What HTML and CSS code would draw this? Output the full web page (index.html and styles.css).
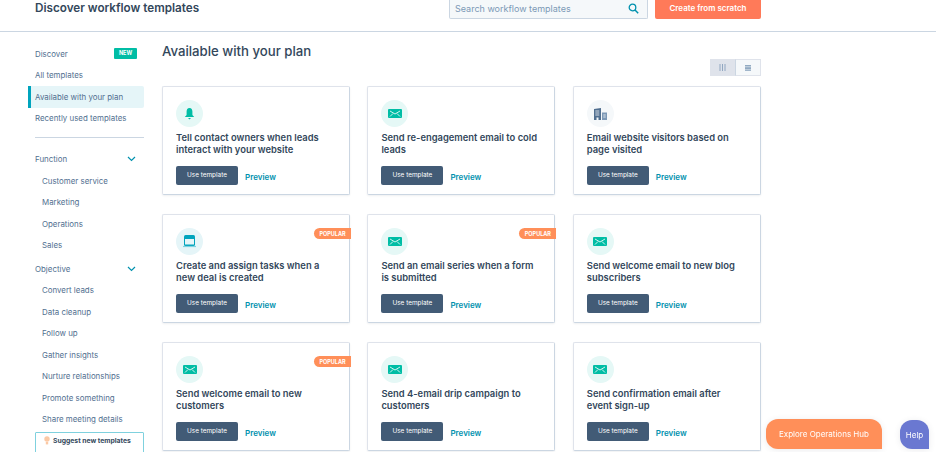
FILE: index.html
```html
<!DOCTYPE html>
<html lang="en">
<head>
<meta charset="utf-8">
<title>Discover workflow templates</title>
<link rel="stylesheet" href="styles.css">
</head>
<body>
<svg class="defs" width="0" height="0" aria-hidden="true">
  <defs>
    <symbol id="mail" viewBox="0 0 14 9"><rect width="14" height="9" rx="1" fill="#00bda5"/><path d="M2 2 7 5 12 2M2 7.5l3-3M12 7.5 9 4.5" fill="none" stroke="#e5f8f6" stroke-width=".9"/></symbol>
  </defs>
</svg>
<header class="topbar">
  <h1 class="page-title">Discover workflow templates</h1>
  <div class="top-actions">
    <div class="search"><span>Search workflow templates</span>
      <svg width="11" height="11" viewBox="0 0 11 11"><circle cx="4.5" cy="4.5" r="3.3" fill="none" stroke="#0091ae" stroke-width="1.3"/><path d="M7 7l3.2 3.2" stroke="#0091ae" stroke-width="1.5"/></svg>
    </div>
    <div class="btn-create">Create from scratch</div>
  </div>
</header>
<div class="layout">
  <nav class="side">
    <div class="nav-item"><span>Discover</span><span class="new">NEW</span></div>
    <div class="nav-item">All templates</div>
    <div class="nav-item active">Available with your plan</div>
    <div class="nav-item">Recently used templates</div>
    <div class="rule"></div>
    <div class="nav-head"><span>Function</span><svg width="9" height="6" viewBox="0 0 9 6"><path d="M1 1l3.5 3.5L8 1" fill="none" stroke="#0091ae" stroke-width="1.2"/></svg></div>
    <div class="nav-sub">Customer service</div>
    <div class="nav-sub">Marketing</div>
    <div class="nav-sub">Operations</div>
    <div class="nav-sub">Sales</div>
    <div class="nav-head second"><span>Objective</span><svg width="9" height="6" viewBox="0 0 9 6"><path d="M1 1l3.5 3.5L8 1" fill="none" stroke="#0091ae" stroke-width="1.2"/></svg></div>
    <div class="nav-sub">Convert leads</div>
    <div class="nav-sub">Data cleanup</div>
    <div class="nav-sub">Follow up</div>
    <div class="nav-sub">Gather insights</div>
    <div class="nav-sub">Nurture relationships</div>
    <div class="nav-sub">Promote something</div>
    <div class="nav-sub">Share meeting details</div>
    <div class="suggest">
      <svg width="6" height="9" viewBox="0 0 6 9"><circle cx="3" cy="3" r="2.7" fill="#fbc9a5"/><rect x="1.8" y="6" width="2.4" height="2.4" fill="#fbc9a5"/></svg>
      <span>Suggest new templates</span>
    </div>
  </nav>
  <main class="content">
    <h2 class="section-title">Available with your plan</h2>
    <div class="toggle">
      <div class="tg on"><svg width="7" height="7" viewBox="0 0 7 7"><path d="M1 0v7M3.5 0v7M6 0v7" stroke="#7c98b6" stroke-width=".8"/></svg></div>
      <div class="tg"><svg width="6" height="6" viewBox="0 0 6 6"><path d="M0 .7h6M0 2.2h6M0 3.7h6M0 5.2h6" stroke="#7c98b6" stroke-width="1"/></svg></div>
    </div>
    <div class="grid">
      <article class="card">
        <div class="ico mint"><svg width="11" height="12" viewBox="0 0 11 12"><path d="M5.5 0C7.5 0 8.4 1.6 8.4 3.5V7l1.8 2H.8l1.8-2V3.5C2.6 1.6 3.5 0 5.5 0z" fill="#00bda5"/><path d="M4 10h3l-1.5 1.6z" fill="#00bda5"/></svg></div>
        <h3>Tell contact owners when leads interact with your website</h3>
        <div class="acts"><span class="use">Use template</span><span class="prev">Preview</span></div>
      </article>
      <article class="card">
        <div class="ico mint"><svg width="14" height="9"><use href="#mail"/></svg></div>
        <h3>Send re-engagement email to cold leads</h3>
        <div class="acts"><span class="use">Use template</span><span class="prev">Preview</span></div>
      </article>
      <article class="card">
        <div class="ico grey"><svg width="13" height="12" viewBox="0 0 13 12"><path d="M0 1l7-1v12H4.5V9.5h-2V12H0z" fill="#516f90"/><path d="M8 4.5h5V12H8z" fill="#7c98b6"/><path d="M1.3 3h4M1.3 5h4M1.3 7h4M9.3 7h2.4M9.3 9h2.4" stroke="#f5f8fa" stroke-width=".8"/></svg></div>
        <h3>Email website visitors based on page visited</h3>
        <div class="acts"><span class="use">Use template</span><span class="prev">Preview</span></div>
      </article>
      <article class="card">
        <span class="badge">POPULAR</span>
        <div class="ico sky"><svg width="13" height="13" viewBox="0 0 13 13"><rect x="1" y="0" width="11" height="11" rx="1.5" fill="#00a4bd"/><rect x="2" y="4" width="9" height="5.5" fill="#e5f5f8"/><path d="M0 11.5h13" stroke="#7fd1de" stroke-width="1.2"/></svg></div>
        <h3>Create and assign tasks when a new deal is created</h3>
        <div class="acts"><span class="use">Use template</span><span class="prev">Preview</span></div>
      </article>
      <article class="card">
        <span class="badge">POPULAR</span>
        <div class="ico mint"><svg width="14" height="9"><use href="#mail"/></svg></div>
        <h3>Send an email series when a form is submitted</h3>
        <div class="acts"><span class="use">Use template</span><span class="prev">Preview</span></div>
      </article>
      <article class="card">
        <div class="ico mint"><svg width="14" height="9"><use href="#mail"/></svg></div>
        <h3>Send welcome email to new blog subscribers</h3>
        <div class="acts"><span class="use">Use template</span><span class="prev">Preview</span></div>
      </article>
      <article class="card">
        <span class="badge">POPULAR</span>
        <div class="ico mint"><svg width="14" height="9"><use href="#mail"/></svg></div>
        <h3>Send welcome email to new customers</h3>
        <div class="acts"><span class="use">Use template</span><span class="prev">Preview</span></div>
      </article>
      <article class="card">
        <div class="ico mint"><svg width="14" height="9"><use href="#mail"/></svg></div>
        <h3>Send 4-email drip campaign to customers</h3>
        <div class="acts"><span class="use">Use template</span><span class="prev">Preview</span></div>
      </article>
      <article class="card">
        <div class="ico mint"><svg width="14" height="9"><use href="#mail"/></svg></div>
        <h3>Send confirmation email after event sign-up</h3>
        <div class="acts"><span class="use">Use template</span><span class="prev">Preview</span></div>
      </article>
    </div>
  </main>
</div>
<div class="float-explore">Explore Operations Hub</div>
<div class="float-help">Help</div>
</body>
</html>
```

FILE: styles.css
```css
* { box-sizing: border-box; }
html, body { margin: 0; height: 452px; overflow: hidden; background: #fff; }
body { font-family: "Inter", "Liberation Sans", sans-serif; color: #33475b; }
.defs { position: absolute; }
h1, h2, h3 { margin: 0; }

.topbar { height: 32px; border-bottom: 1px solid #cbd6e2; display: flex; justify-content: space-between; align-items: flex-end; padding: 0 175px 12px 35px; }
.page-title { font-size: 11.7px; font-weight: 600; align-self: flex-start; line-height: 16px; }
.top-actions { display: flex; gap: 7px; }
.search { width: 199px; height: 20px; background: #f5f8fa; border: 1px solid #cbd6e2; border-top: 0; border-radius: 0 0 2px 2px; display: flex; justify-content: space-between; align-items: center; padding: 0 8px 1px 5px; font-size: 9px; color: #7c98b6; }
.btn-create { width: 106px; height: 20px; background: #ff7a59; color: #fff; border-radius: 0 0 2px 2px; font-size: 8px; font-weight: 600; display: flex; align-items: center; justify-content: center; padding-bottom: 2px; }

.layout { display: flex; }
.side { width: 116px; margin-left: 28px; padding-top: 11px; font-size: 7.9px; color: #516f90; flex: none; }
.nav-item { height: 21.5px; padding: 0 7px; display: flex; align-items: center; justify-content: space-between; }
.nav-item.active { background: #e5f5f8; border-left: 3px solid #00a4bd; padding-left: 4px; border-radius: 0 2px 2px 0; }
.new { background: #00bda5; color: #fff; font-size: 5.5px; font-weight: 700; width: 23px; height: 11px; text-align: center; border-radius: 1px; line-height: 11px; }
.rule { border-top: 1px solid #cbd6e2; margin: 7.5px 0 11px 7px; }
.nav-head { height: 21.5px; padding: 0 8px 0 7px; display: flex; align-items: center; justify-content: space-between; }
.nav-head.second { margin-top: 2px; }
.nav-sub { height: 21.5px; padding-left: 14px; display: flex; align-items: center; }
.suggest { margin: 1.5px 0 0 7px; height: 40px; border: 1px solid #7fd1de; border-radius: 1px; padding: 3px 0 0 8px; display: flex; align-items: flex-start; gap: 3px; font-size: 6.8px; font-weight: 700; color: #33475b; line-height: 9px; }

.content { margin-left: 18px; width: 599px; flex: none; position: relative; }
.section-title { font-size: 13.2px; font-weight: 500; line-height: 18px; padding-top: 10px; height: 27px; }
.toggle { display: flex; justify-content: flex-end; height: 17px; margin-bottom: 10px; }
.tg { width: 25.5px; height: 17px; background: #f5f8fa; border: 1px solid #dfe3eb; display: flex; align-items: center; justify-content: center; }
.tg.on { background: #dfe3eb; border-right: 1px solid #cbd6e2; }
.tg + .tg { border-left: 0; }
.grid { display: grid; grid-template-columns: repeat(3, 188px); column-gap: 17.4px; row-gap: 19px; }
.card { position: relative; height: 109px; border: 1px solid #dfe3eb; border-right-color: #cbd6e2; border-bottom-color: #cbd6e2; border-radius: 2px; padding: 13px 13px 0; box-shadow: 0 1px 2px rgba(45,62,80,.08); }
.ico { width: 27px; height: 27px; border-radius: 50%; display: flex; align-items: center; justify-content: center; }
.ico.mint { background: #e5f8f6; }
.ico.sky { background: #e5f5f8; }
.ico.grey { background: #f5f8fa; }
.card h3 { font-size: 9.4px; font-weight: 600; line-height: 11.5px; height: 23px; margin-top: 5px; }
.acts { display: flex; align-items: center; gap: 7px; margin-top: 11px; }
.use { width: 62px; height: 19px; background: #425b76; color: #fff; font-size: 6.4px; border-radius: 2px; display: flex; align-items: center; justify-content: center; padding-bottom: 2px; }
.prev { font-size: 8px; font-weight: 600; color: #0091ae; padding-top: 3px; }
.badge { position: absolute; top: 13px; right: -2px; width: 37px; height: 11px; background: #ff8f59; color: #fff; font-size: 5.5px; font-weight: 700; border-radius: 6px 0 0 6px; display: flex; align-items: center; justify-content: center; }

.float-explore { position: fixed; left: 766px; top: 419px; width: 116px; height: 30px; background: #ff8f59; color: #fff; font-size: 8px; border-radius: 12px 12px 0 12px; display: flex; align-items: center; justify-content: center; box-shadow: 0 1px 6px rgba(45,62,80,.1); }
.float-help { position: fixed; left: 900px; top: 420px; width: 29px; height: 29px; background: #6a78d1; color: #fff; font-size: 8px; border-radius: 12px 12px 0 12px; display: flex; align-items: center; justify-content: center; box-shadow: 0 1px 6px rgba(45,62,80,.1); }
```
